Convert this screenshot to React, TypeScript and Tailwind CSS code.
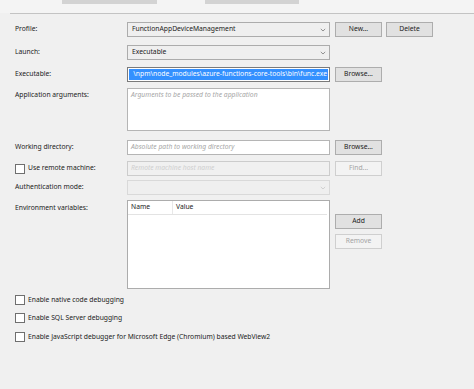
import React from "react";

function Chevron({ disabled }: { disabled?: boolean }) {
  return (
    <svg width="6" height="4" viewBox="0 0 6 4" className="mr-[3px] shrink-0">
      <path
        d="M0.8 0.9 L3 3 L5.2 0.9"
        fill="none"
        stroke={disabled ? "#c8c8c8" : "#777777"}
        strokeWidth="0.8"
      />
    </svg>
  );
}

function Button({ label, disabled }: { label: string; disabled?: boolean }) {
  return (
    <div
      className={
        disabled
          ? "w-[47px] h-[15px] flex items-center justify-center border border-[#cfcfcf] bg-[#f3f3f3] text-[#a3a3a3]"
          : "w-[47px] h-[15px] flex items-center justify-center border border-[#adadad] bg-[#e1e1e1]"
      }
    >
      {label}
    </div>
  );
}

function Check({ label }: { label: string }) {
  return (
    <div className="flex items-center h-[10px]">
      <div className="w-[10px] h-[10px] border border-[#6f6f6f] bg-white" />
      <span className="ml-[3px]">{label}</span>
    </div>
  );
}

export default function App() {
  return (
    <div className="w-[474px] h-[389px] bg-[#f0f0f0] overflow-hidden font-['Noto_Sans',sans-serif] text-[6.75px] leading-none text-[#1b1b1b]">
      {/* tab strip */}
      <div className="h-[13px] flex bg-[#f4f4f4]">
        <div className="w-[62px]" />
        <div className="w-[95px] h-[4px] bg-[#d3d3d3]" />
        <div className="w-[48px]" />
        <div className="w-[94px] h-[4px] bg-[#d3d3d3]" />
      </div>
      <div className="ml-[10px] h-px bg-[#c3c3c3]" />

      <div className="pl-[15px]">
        {/* Profile */}
        <div className="mt-[8px] flex items-center h-[15px]">
          <div className="w-[112px]">Profile:</div>
          <div className="w-[203px] h-[15px] border border-[#acacac] bg-[#efefef] flex items-center justify-between pl-[4px]">
            <span>FunctionAppDeviceManagement</span>
            <Chevron />
          </div>
          <div className="ml-[5px] flex gap-[4px]">
            <Button label="New..." />
            <Button label="Delete" />
          </div>
        </div>

        {/* Launch */}
        <div className="mt-[8px] flex items-center h-[15px]">
          <div className="w-[112px]">Launch:</div>
          <div className="w-[203px] h-[15px] border border-[#acacac] bg-[#efefef] flex items-center justify-between pl-[4px]">
            <span>Executable</span>
            <Chevron />
          </div>
        </div>

        {/* Executable */}
        <div className="mt-[7px] flex items-center h-[15px]">
          <div className="w-[112px]">Executable:</div>
          <div className="w-[203px] h-[15px] border border-[#7a7a7a] bg-white p-px">
            <div className="h-full bg-[#3390ff] text-white flex items-center justify-end whitespace-nowrap pr-px">
              {"\\npm\\node_modules\\azure-functions-core-tools\\bin\\func.exe"}
            </div>
          </div>
          <div className="ml-[5px]">
            <Button label="Browse..." />
          </div>
        </div>

        {/* Application arguments */}
        <div className="mt-[6px] flex items-start h-[43px]">
          <div className="w-[112px] pt-[4px]">Application arguments:</div>
          <div className="w-[203px] h-[43px] border border-[#b5b5b5] bg-white pl-[3px] pt-[3px] italic text-[#a6a6a6]">
            Arguments to be passed to the application
          </div>
        </div>

        {/* Working directory */}
        <div className="mt-[9px] flex items-center h-[15px]">
          <div className="w-[112px]">Working directory:</div>
          <div className="w-[203px] h-[15px] border border-[#b5b5b5] bg-white flex items-center pl-[3px] italic text-[#a6a6a6]">
            Absolute path to working directory
          </div>
          <div className="ml-[5px]">
            <Button label="Browse..." />
          </div>
        </div>

        {/* Remote machine */}
        <div className="mt-[6px] flex items-center h-[15px]">
          <div className="w-[112px] flex items-center">
            <div className="w-[10px] h-[10px] border border-[#6f6f6f] bg-white" />
            <span className="ml-[3px]">Use remote machine:</span>
          </div>
          <div className="w-[203px] h-[15px] border border-[#cccccc] bg-[#f0f0f0] flex items-center pl-[3px] italic text-[#cfcfcf]">
            Remote machine host name
          </div>
          <div className="ml-[5px]">
            <Button label="Find..." disabled />
          </div>
        </div>

        {/* Authentication mode */}
        <div className="mt-[4px] flex items-center h-[15px]">
          <div className="w-[112px]">Authentication mode:</div>
          <div className="w-[203px] h-[15px] border border-[#d9d9d9] bg-[#efefef] flex items-center justify-end">
            <Chevron disabled />
          </div>
        </div>

        {/* Environment variables */}
        <div className="mt-[5px] flex items-start h-[89px]">
          <div className="w-[112px] pt-[5px]">Environment variables:</div>
          <div className="w-[203px] h-[89px] border border-[#acacac] bg-white">
            <div className="h-[14px] flex items-center border-b border-[#e3e3e3] mr-[2px]">
              <div className="w-[45px] pl-[3px] border-r border-[#e8e8e8] h-full flex items-center">
                Name
              </div>
              <div className="pl-[3px]">Value</div>
            </div>
          </div>
          <div className="ml-[5px] pt-[14px] flex flex-col gap-[5px]">
            <Button label="Add" />
            <Button label="Remove" disabled />
          </div>
        </div>

        {/* debugger checkboxes */}
        <div className="mt-[6px]">
          <Check label="Enable native code debugging" />
        </div>
        <div className="mt-[8px]">
          <Check label="Enable SQL Server debugging" />
        </div>
        <div className="mt-[9px]">
          <Check label="Enable JavaScript debugger for Microsoft Edge (Chromium) based WebView2" />
        </div>
      </div>
    </div>
  );
}
